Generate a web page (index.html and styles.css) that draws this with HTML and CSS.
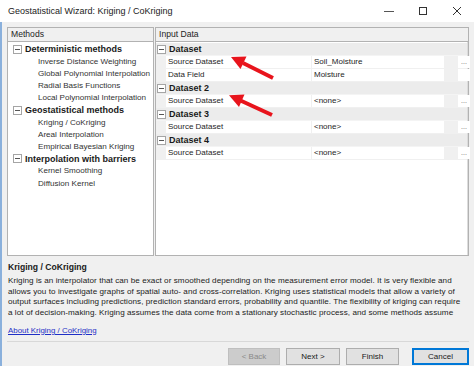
FILE: index.html
```html
<!DOCTYPE html>
<html lang="en">
<head>
    <meta charset="UTF-8">
    <meta name="viewport" content="width=device-width, initial-scale=1.0">
    <title>Geostatistical Wizard: Kriging / CoKriging</title>
    <link rel="stylesheet" href="styles.css">
</head>
<body>
    <div class="window">
        <div class="titlebar">
            <span class="title">Geostatistical Wizard: Kriging / CoKriging</span>
            <div class="win-btn">
                <svg width="10" height="10" viewBox="0 0 10 10"><line x1="0" y1="5.5" x2="10" y2="5.5" stroke="#555" stroke-width="1"/></svg>
            </div>
            <div class="win-btn">
                <svg width="10" height="10" viewBox="0 0 10 10"><rect x="1.5" y="1.5" width="7" height="7" fill="none" stroke="#333" stroke-width="1"/></svg>
            </div>
            <div class="win-btn">
                <svg width="10" height="10" viewBox="0 0 10 10"><path d="M1 1 L9 9 M9 1 L1 9" stroke="#333" stroke-width="1"/></svg>
            </div>
        </div>

        <div class="frame">
            <div class="panes">
                <div class="pane methods">
                    <div class="pane-head">Methods</div>
                    <div class="tree">
                        <div class="tree-row group"><span class="toggle"></span>Deterministic methods</div>
                        <div class="tree-row leaf">Inverse Distance Weighting</div>
                        <div class="tree-row leaf">Global Polynomial Interpolation</div>
                        <div class="tree-row leaf">Radial Basis Functions</div>
                        <div class="tree-row leaf">Local Polynomial Interpolation</div>
                        <div class="tree-row group"><span class="toggle"></span>Geostatistical methods</div>
                        <div class="tree-row leaf">Kriging / CoKriging</div>
                        <div class="tree-row leaf">Areal Interpolation</div>
                        <div class="tree-row leaf">Empirical Bayesian Kriging</div>
                        <div class="tree-row group"><span class="toggle"></span>Interpolation with barriers</div>
                        <div class="tree-row leaf">Kernel Smoothing</div>
                        <div class="tree-row leaf">Diffusion Kernel</div>
                    </div>
                </div>

                <div class="pane input">
                    <div class="pane-head">Input Data</div>
                    <div class="grid">
                        <div class="category"><span class="toggle"></span>Dataset</div>
                        <div class="prop">
                            <span class="margin"></span>
                            <span class="label">Source Dataset</span>
                            <span class="value">Soil_Moisture</span>
                            <span class="drop"></span>
                            <span class="more">...</span>
                        </div>
                        <div class="prop">
                            <span class="margin"></span>
                            <span class="label">Data Field</span>
                            <span class="value">Moisture</span>
                            <span class="drop"></span>
                            <span class="more"></span>
                        </div>
                        <div class="category"><span class="toggle"></span>Dataset 2</div>
                        <div class="prop">
                            <span class="margin"></span>
                            <span class="label">Source Dataset</span>
                            <span class="value">&lt;none&gt;</span>
                            <span class="drop"></span>
                            <span class="more">...</span>
                        </div>
                        <div class="category"><span class="toggle"></span>Dataset 3</div>
                        <div class="prop">
                            <span class="margin"></span>
                            <span class="label">Source Dataset</span>
                            <span class="value">&lt;none&gt;</span>
                            <span class="drop"></span>
                            <span class="more">...</span>
                        </div>
                        <div class="category"><span class="toggle"></span>Dataset 4</div>
                        <div class="prop">
                            <span class="margin"></span>
                            <span class="label">Source Dataset</span>
                            <span class="value">&lt;none&gt;</span>
                            <span class="drop"></span>
                            <span class="more">...</span>
                        </div>
                    </div>
                </div>
            </div>

            <div class="desc">
                <h2>Kriging / CoKriging</h2>
                <p>Kriging is an interpolator that can be exact or smoothed depending on the measurement error model. It is very flexible and allows you to investigate graphs of spatial auto- and cross-correlation. Kriging uses statistical models that allow a variety of output surfaces including predictions, prediction standard errors, probability and quantile. The flexibility of kriging can require a lot of decision-making. Kriging assumes the data come from a stationary stochastic process, and some methods assume</p>
                <a href="#">About Kriging / CoKriging</a>
            </div>

            <div class="buttons">
                <button class="btn back" disabled>&lt; Back</button>
                <button class="btn next">Next &gt;</button>
                <button class="btn finish">Finish</button>
                <button class="btn cancel">Cancel</button>
            </div>
        </div>

        <!-- red annotation arrows drawn over the grid -->
        <svg class="arrows" width="474" height="366" viewBox="0 0 474 366">
            <line x1="273" y1="78" x2="243" y2="63" stroke="#e8141c" stroke-width="4"/>
            <polygon points="231,57 246.5,56.5 240.5,69" fill="#e8141c"/>
            <line x1="272" y1="115" x2="241" y2="100.8" stroke="#e8141c" stroke-width="4"/>
            <polygon points="229,95.3 244.5,94.5 239,107" fill="#e8141c"/>
        </svg>
    </div>
</body>
</html>
```

FILE: styles.css
```css
body {
    margin: 0;
    background-color: #f0f0f0;
    font-family: 'Liberation Sans', Arial, sans-serif;
    color: #1e1e1e;
}

.window {
    position: relative;
    width: 474px;
    height: 366px;
    overflow: hidden;
    display: flex;
    flex-direction: column;
}

.titlebar {
    height: 22px;
    flex-shrink: 0;
    background-color: #fff;
    display: flex;
    align-items: center;
}

.title {
    flex: 1;
    padding-left: 8px;
    font-size: 9px;
    color: #222;
}

.win-btn {
    width: 34px;
    height: 22px;
    display: flex;
    align-items: center;
    justify-content: center;
}

.frame {
    flex: 1;
    border-left: 2px solid #8ab0dc;
    padding: 5px 5px 0 5px;
    display: flex;
    flex-direction: column;
}

.panes {
    display: flex;
    gap: 1px;
    height: 229px;
    flex-shrink: 0;
}

.pane {
    background-color: #fff;
    border: 1px solid #b2b2b2;
    display: flex;
    flex-direction: column;
    box-sizing: border-box;
}

.methods {
    width: 147px;
}

.input {
    flex: 1;
}

.pane-head {
    height: 13px;
    line-height: 13px;
    background-color: #f0f0f0;
    border-bottom: 1px solid #b2b2b2;
    padding-left: 3px;
    font-size: 8.6px;
}

.toggle {
    position: relative;
    width: 7px;
    height: 7px;
    border: 1px solid #a5a5a5;
    background-color: #fff;
    flex-shrink: 0;
}

.toggle::after {
    content: '';
    position: absolute;
    left: 1px;
    right: 1px;
    top: 3px;
    height: 1px;
    background-color: #555;
}

/* methods tree */
.tree {
    padding-top: 1px;
}

.tree-row {
    height: 12.2px;
    display: flex;
    align-items: center;
    white-space: nowrap;
    font-size: 8.1px;
    color: #333;
}

.tree-row.group {
    padding-left: 5px;
    font-weight: bold;
    font-size: 9px;
    color: #1a1a1a;
}

.tree-row.group .toggle {
    margin-right: 3px;
}

.tree-row.leaf {
    padding-left: 30px;
}

/* property grid */
.grid {
    padding-top: 1px;
    width: 311px;
    border-right: 1px solid #dcdcdc;
    flex: 1;
}

.category {
    height: 13px;
    display: flex;
    align-items: center;
    background-color: #ececec;
    padding-left: 1px;
    font-weight: bold;
    font-size: 9px;
    color: #1a1a1a;
    box-sizing: border-box;
    border-bottom: 1px solid #f4f4f4;
}

.category .toggle {
    margin-right: 3px;
}

.prop {
    height: 13px;
    display: grid;
    grid-template-columns: 9px 145px 132px 12px 12px;
    column-gap: 1px;
    background-color: #f0f0f0;
    font-size: 8px;
    box-sizing: border-box;
    border-bottom: 1px solid #f0f0f0;
}

.prop span {
    background-color: #fff;
    line-height: 12px;
    white-space: nowrap;
}

.prop .margin,
.prop .drop {
    background-color: #f0f0f0;
}

.prop .label {
    padding-left: 2px;
}

.prop .value {
    padding-left: 2px;
}

.prop .more {
    font-size: 7px;
    color: #666;
    text-align: center;
}

/* description */
.desc {
    padding: 0 1px;
}

.desc h2 {
    margin: 6px 0 3px;
    font-size: 8.6px;
    line-height: 11px;
    color: #1a1a1a;
}

.desc p {
    margin: 0;
    max-width: 458px;
    font-size: 8.1px;
    letter-spacing: 0.06px;
    line-height: 10.7px;
    color: #222;
}

.desc a {
    display: inline-block;
    margin-top: 4px;
    font-size: 7.9px;
    line-height: 11px;
    color: #1f2fc6;
}

.buttons {
    margin-top: 4px;
    border-top: 1px solid #d8d8d8;
    padding-top: 6px;
    display: flex;
    justify-content: flex-end;
}

.btn {
    height: 17px;
    margin: 0 0 0 6px;
    padding: 0;
    border: 1px solid #adadad;
    background-color: #e1e1e1;
    font-family: 'Liberation Sans', Arial, sans-serif;
    font-size: 8px;
    color: #1a1a1a;
}

.back {
    width: 52px;
    background-color: #cccccc;
    border-color: #bfbfbf;
    color: #8a8a8a;
}

.next {
    width: 54px;
}

.finish {
    width: 53px;
}

.cancel {
    width: 57px;
    margin-left: 13px;
    border-color: #0078d7;
    box-shadow: inset 0 0 0 1px #0078d7;
}

.arrows {
    position: absolute;
    left: 0;
    top: 0;
    pointer-events: none;
}
```
